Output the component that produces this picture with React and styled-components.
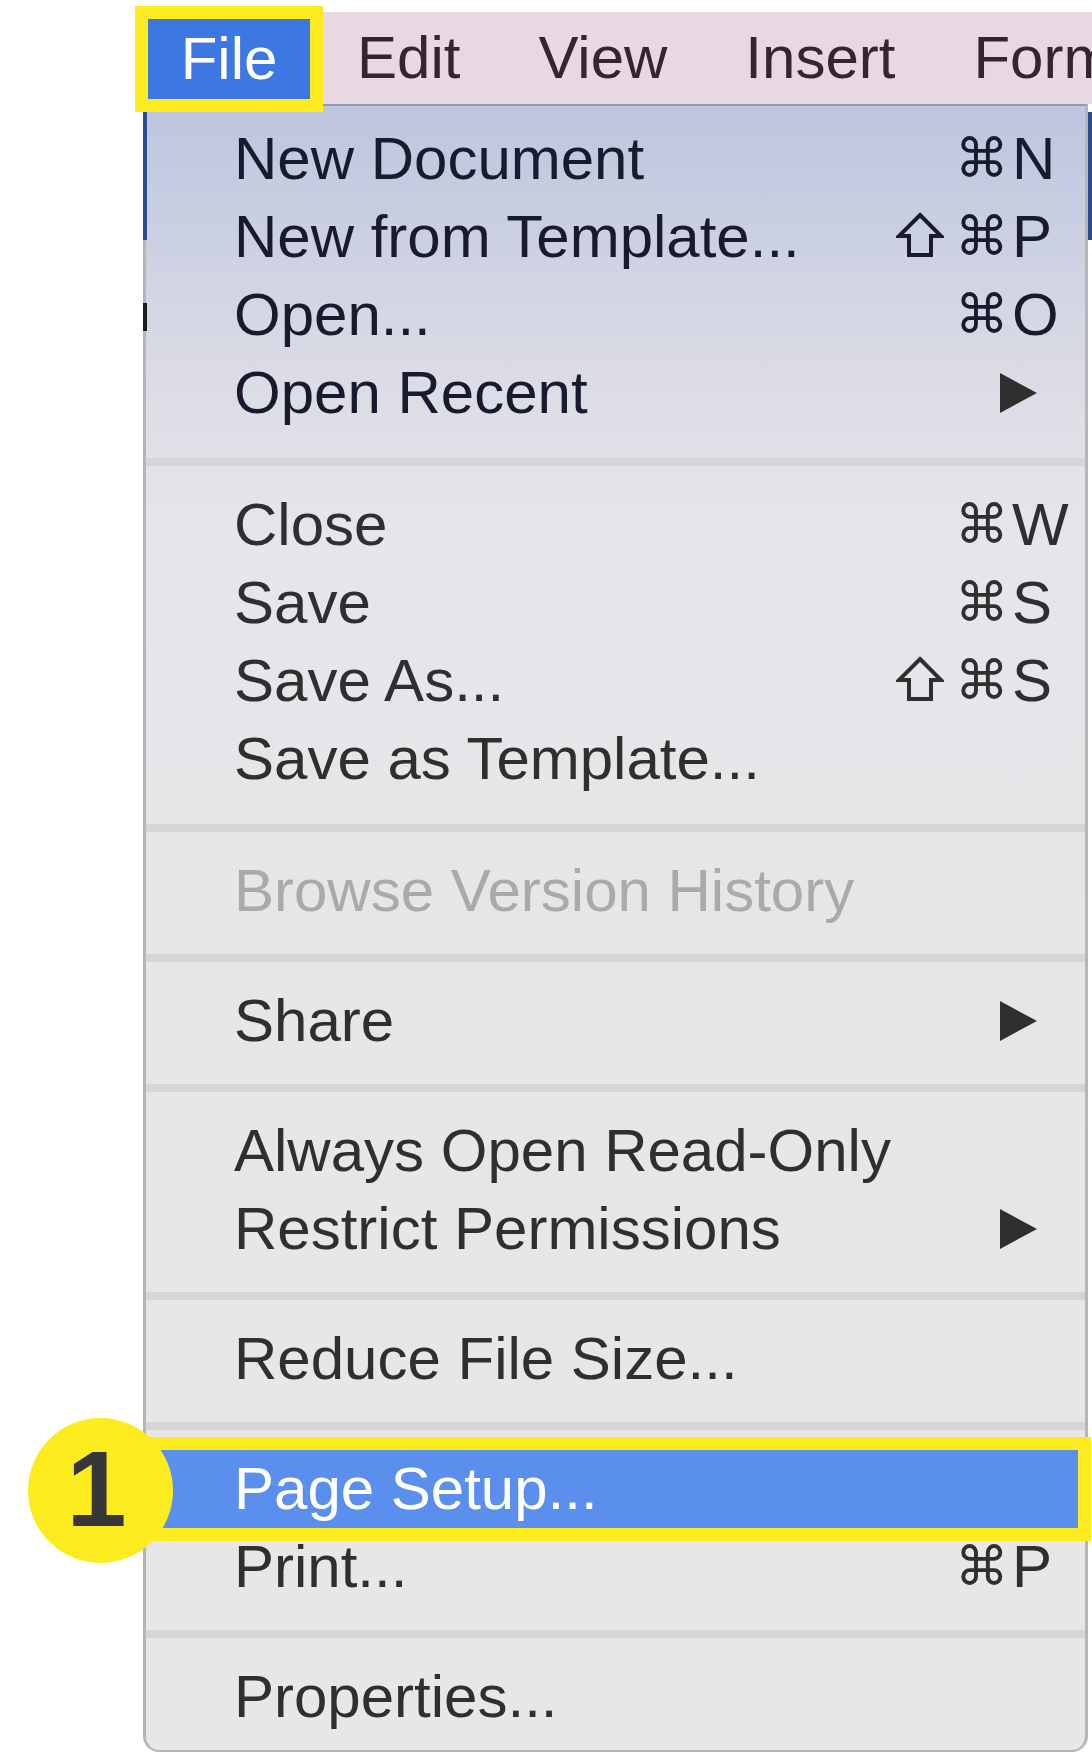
import styled, { createGlobalStyle } from "styled-components";

const GlobalStyle = createGlobalStyle`
  html, body {
    margin: 0;
    padding: 0;
    background: #fff;
    overflow: hidden;
  }
  body {
    font-family: "Liberation Sans", Arial, sans-serif;
  }
`;

// STYLES
const Page = styled.div`
  width: 1092px;
  height: 1754px;
  box-sizing: border-box;
  padding-left: 135px;
  overflow: hidden;
`;

const MenuBar = styled.div`
  display: flex;
  align-items: center;
  height: 92px;
  margin-top: 12px;
  background: #e8d8e3;
`;

const FileTab = styled.div`
  position: relative;
  z-index: 2;
  box-sizing: border-box;
  flex: none;
  width: 188px;
  height: 106px;
  margin: -6px 0 -8px;
  border: 13px solid #fcec1f;
  background: #3d78e2;
  color: #fff;
  display: flex;
  align-items: center;
  justify-content: center;
  font-size: 60px;
  line-height: 60px;
`;

const BarMenus = styled.div`
  display: flex;
  gap: 78px;
  padding-left: 34px;
  white-space: nowrap;
  color: #35252f;
  font-size: 60px;
  line-height: 60px;
`;

const Menu = styled.div`
  position: relative;
  box-sizing: border-box;
  width: 945px;
  margin-left: 8px;
  border: 3px solid #b6b5b8;
  border-top: 2px solid #8f9ab1;
  border-bottom-width: 2px;
  border-radius: 0 0 16px 16px;
  padding-bottom: 14px;
  background: linear-gradient(
    180deg,
    #bdc6de 0px,
    #ccd1e2 140px,
    #dcdce6 280px,
    #e7e5e9 420px,
    #e9e6e8 100%
  );

  /* window behind the menu peeking out at the edges */
  &::before,
  &::after {
    content: "";
    position: absolute;
    top: 6px;
    width: 4px;
  }
  &::before {
    left: -3px;
    height: 220px;
    background: linear-gradient(
      180deg,
      #2d4c8c 0 128px,
      transparent 128px 191px,
      #1c1c1c 191px 219px,
      transparent 219px
    );
  }
  &::after {
    right: -7px;
    height: 128px;
    background: #2d4c8c;
  }
`;

const Group = styled.div`
  padding: ${(p) => p.$top}px 0 ${(p) => p.$bottom}px;
  color: ${(p) => (p.$dark ? "#171b2d" : "#2f2e31")};
`;

const Separator = styled.div`
  height: 8px;
  background: #d7d4d7;
`;

const Row = styled.div`
  position: relative;
  display: grid;
  grid-template-columns: 1fr auto 73px;
  column-gap: 3px;
  align-items: center;
  height: 78px;
  padding-left: 88px;
  font-size: 60px;
  line-height: 78px;
  white-space: nowrap;
  color: ${(p) => (p.$disabled ? "#aba9ac" : "inherit")};
  ${(p) =>
    p.$active &&
    `
    margin-right: 7px;
    background: #5b8fee;
    color: #fff;
    outline: 13px solid #fcec1f;
  `}
`;

const Mods = styled.span`
  justify-self: end;
  display: flex;
  align-items: center;
  gap: 11px;
  font-family: "DejaVu Sans", sans-serif;
  font-size: 54px;
`;

const ShiftIcon = styled.svg`
  width: 48px;
  height: 46px;
  margin-top: -4px;
`;

const Key = styled.span`
  font-size: 60px;
`;

const Arrow = styled.span`
  grid-column: 3;
  width: 37px;
  height: 40px;
  margin-left: -12px;
  background: #2f2f2f;
  clip-path: polygon(0 0, 100% 50%, 0 100%);
`;

const Badge = styled.div`
  position: absolute;
  z-index: 3;
  left: -118px;
  top: -32px;
  width: 145px;
  height: 145px;
  border-radius: 50%;
  background: #fcec1f;
  color: #363636;
  display: flex;
  align-items: center;
  justify-content: center;
  padding: 0 8px 4px 0;
  box-sizing: border-box;
  font-size: 108px;
  font-weight: 700;
  line-height: 1;
`;
// END STYLES

const groups = [
  {
    top: 14,
    bottom: 26,
    dark: true,
    items: [
      { label: "New Document", key: "N" },
      { label: "New from Template...", shift: true, key: "P" },
      { label: "Open...", key: "O" },
      { label: "Open Recent", submenu: true },
    ],
  },
  {
    top: 20,
    bottom: 26,
    items: [
      { label: "Close", key: "W" },
      { label: "Save", key: "S" },
      { label: "Save As...", shift: true, key: "S" },
      { label: "Save as Template..." },
    ],
  },
  {
    top: 20,
    bottom: 24,
    items: [{ label: "Browse Version History", disabled: true }],
  },
  {
    top: 20,
    bottom: 24,
    items: [{ label: "Share", submenu: true }],
  },
  {
    top: 20,
    bottom: 24,
    items: [
      { label: "Always Open Read-Only" },
      { label: "Restrict Permissions", submenu: true },
    ],
  },
  {
    top: 20,
    bottom: 24,
    items: [{ label: "Reduce File Size..." }],
  },
  {
    top: 20,
    bottom: 24,
    items: [
      { label: "Page Setup...", active: true, step: 1 },
      { label: "Print...", key: "P" },
    ],
  },
  {
    top: 20,
    bottom: 0,
    items: [{ label: "Properties..." }],
  },
];

const barMenus = ["Edit", "View", "Insert", "Format"];

function MenuRow({ item }) {
  return (
    <Row $active={item.active} $disabled={item.disabled}>
      {item.step && <Badge>{item.step}</Badge>}
      <span>{item.label}</span>
      {item.key && (
        <>
          <Mods>
            {item.shift && (
              <ShiftIcon viewBox="0 0 48 46">
                <path
                  d="M24 3 L45 24 H35 V43 H13 V24 H3 Z"
                  fill="none"
                  stroke="currentColor"
                  strokeWidth="4"
                />
              </ShiftIcon>
            )}
            <span>⌘</span>
          </Mods>
          <Key>{item.key}</Key>
        </>
      )}
      {item.submenu && <Arrow />}
    </Row>
  );
}

export default function App() {
  return (
    <>
      <GlobalStyle />
      <Page>
        <MenuBar>
          <FileTab>File</FileTab>
          <BarMenus>
            {barMenus.map((m) => (
              <span key={m}>{m}</span>
            ))}
          </BarMenus>
        </MenuBar>

        <Menu>
          {groups.map((g, i) => (
            <div key={i}>
              {i > 0 && <Separator />}
              <Group $top={g.top} $bottom={g.bottom} $dark={g.dark}>
                {g.items.map((item) => (
                  <MenuRow key={item.label} item={item} />
                ))}
              </Group>
            </div>
          ))}
        </Menu>
      </Page>
    </>
  );
}
